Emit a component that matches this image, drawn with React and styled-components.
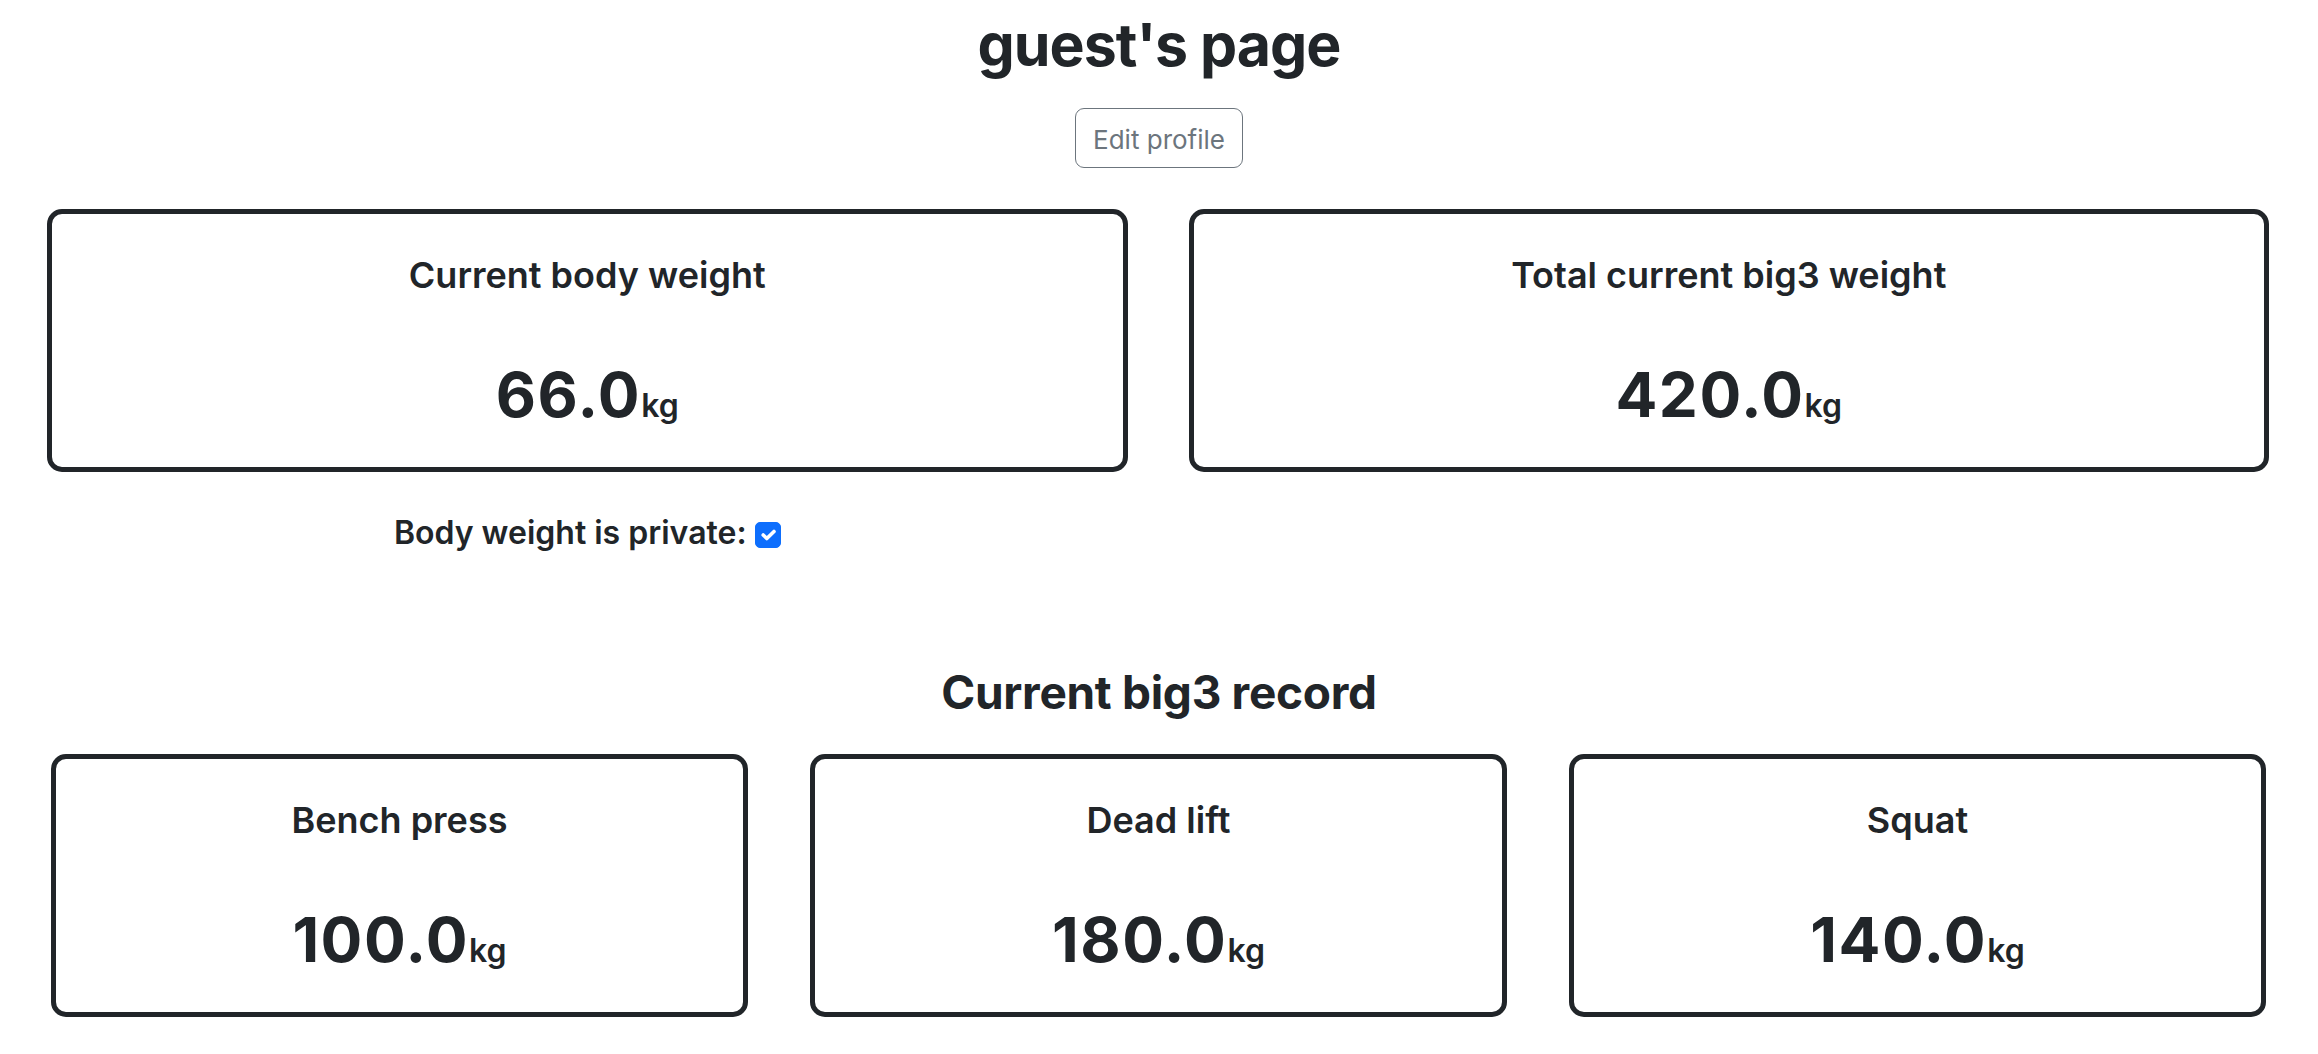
import { useState } from "react";
import styled, { createGlobalStyle } from "styled-components";

const GlobalStyle = createGlobalStyle`
  body {
    margin: 0;
    background-color: #fff;
    color: #212529;
    font-family: Inter, "Noto Sans", "Liberation Sans", sans-serif;
  }
`;

const Page = styled.div`
  display: flex;
  flex-direction: column;
  padding-top: 9px;
`;

const Header = styled.header`
  display: flex;
  flex-direction: column;
  align-items: center;
`;

const Title = styled.h1`
  margin: 0;
  font-size: 59px;
  font-weight: 700;
  line-height: 71px;
  letter-spacing: -1px;
`;

const EditButton = styled.button`
  margin-top: 28px;
  padding: 13px 17px 9px;
  font-family: inherit;
  font-size: 26px;
  line-height: 36px;
  color: #6c757d;
  background: transparent;
  border: 1.5px solid #6c757d;
  border-radius: 9px;
  cursor: pointer;
`;

const Grid = styled.div`
  display: grid;
  grid-template-columns: repeat(${(p) => p.cols}, 1fr);
  column-gap: ${(p) => p.gap}px;
  padding: 0 ${(p) => p.right}px 0 ${(p) => p.left}px;
  margin-top: ${(p) => p.top}px;
`;

const Card = styled.div`
  box-sizing: border-box;
  height: 263px;
  display: flex;
  flex-direction: column;
  align-items: center;
  padding-top: 40px;
  border: 5px solid #212529;
  border-radius: 15px;
`;

const CardTitle = styled.h4`
  margin: 0;
  font-size: 36px;
  font-weight: 600;
  line-height: 1.2;
`;

const CardValue = styled.div`
  margin-top: 62px;
  font-size: 62px;
  font-weight: 700;
  line-height: 72px;
  letter-spacing: 1.5px;
`;

const Unit = styled.span`
  font-size: 32px;
  font-weight: 600;
  letter-spacing: 0;
`;

const PrivacyLabel = styled.label`
  display: flex;
  justify-content: center;
  align-items: center;
  gap: 8px;
  font-size: 32px;
  font-weight: 600;
  line-height: 36px;
  cursor: pointer;
`;

const HiddenInput = styled.input`
  position: absolute;
  opacity: 0;
  width: 0;
  height: 0;
`;

const CheckBox = styled.span`
  display: inline-flex;
  width: 26px;
  height: 26px;
  margin-top: 4px;
  box-sizing: border-box;
  border-radius: 5px;
  background-color: ${(p) => (p.checked ? "#0d6efd" : "#fff")};
  border: 1.5px solid ${(p) => (p.checked ? "#0d6efd" : "#adb5bd")};
`;

const SectionTitle = styled.h2`
  margin: 114px 0 0;
  text-align: center;
  font-size: 46px;
  font-weight: 700;
  line-height: 1.2;
  letter-spacing: -0.3px;
`;

function StatCard({ title, value }) {
  return (
    <Card>
      <CardTitle>{title}</CardTitle>
      <CardValue>
        {value.toFixed(1)}
        <Unit>kg</Unit>
      </CardValue>
    </Card>
  );
}

const records = [
  { title: "Bench press", value: 100 },
  { title: "Dead lift", value: 180 },
  { title: "Squat", value: 140 },
];

export default function App() {
  const [isPrivate, setIsPrivate] = useState(true);
  const total = records.reduce((sum, r) => sum + r.value, 0);

  return (
    <Page>
      <GlobalStyle />
      <Header>
        <Title>guest's page</Title>
        <EditButton>Edit profile</EditButton>
      </Header>

      <Grid cols={2} gap={61} left={47} right={49} top={41}>
        <StatCard title="Current body weight" value={66} />
        <StatCard title="Total current big3 weight" value={total} />
      </Grid>

      <Grid cols={2} gap={61} left={47} right={49} top={43}>
        <PrivacyLabel>
          Body weight is private:
          <HiddenInput
            type="checkbox"
            checked={isPrivate}
            onChange={(e) => setIsPrivate(e.target.checked)}
          />
          <CheckBox checked={isPrivate}>
            {isPrivate && (
              <svg viewBox="0 0 20 20" width="100%" height="100%">
                <path
                  d="m6 10 3 3 6-6"
                  fill="none"
                  stroke="#fff"
                  strokeWidth="3"
                  strokeLinecap="round"
                  strokeLinejoin="round"
                />
              </svg>
            )}
          </CheckBox>
        </PrivacyLabel>
      </Grid>

      <SectionTitle>Current big3 record</SectionTitle>

      <Grid cols={3} gap={62} left={51} right={52} top={34}>
        {records.map((r) => (
          <StatCard key={r.title} title={r.title} value={r.value} />
        ))}
      </Grid>
    </Page>
  );
}
